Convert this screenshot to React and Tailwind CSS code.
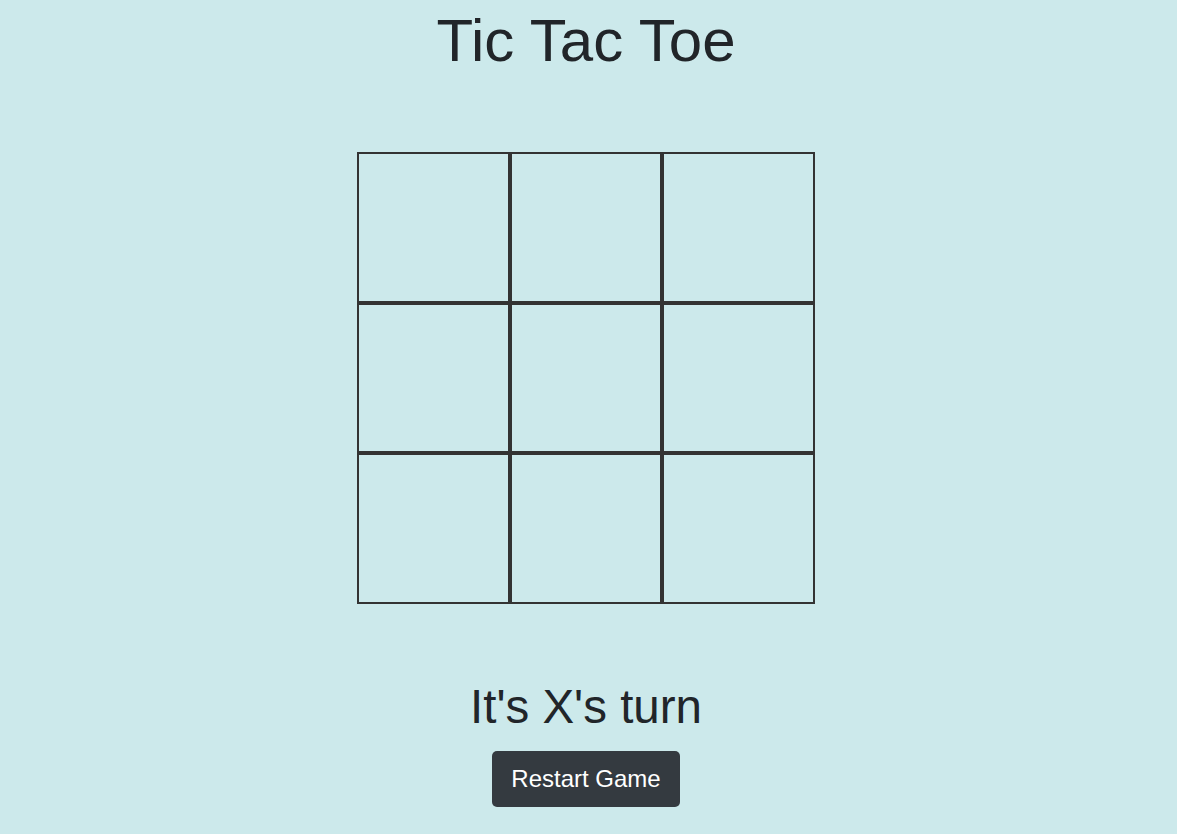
import { useState } from "react"

const Cell = ({ value, onClick }) => (
  <button
    onClick={onClick}
    className="h-[150.67px] border-2 border-[#333] flex items-center justify-center text-[80px] text-[#212529] leading-none"
  >
    {value}
  </button>
)

const App = () => {
  const [board, setBoard] = useState(Array(9).fill(null))
  const [xTurn, setXTurn] = useState(true)

  const handleClick = (i) => {
    if (board[i]) return
    const next = board.slice()
    next[i] = xTurn ? "X" : "O"
    setBoard(next)
    setXTurn(!xTurn)
  }

  const restart = () => {
    setBoard(Array(9).fill(null))
    setXTurn(true)
  }

  return (
    <div className="min-h-[834px] bg-[#cce9eb] font-['Liberation_Sans',Arial,sans-serif] text-[#212529]">
      <div className="flex flex-col items-center pr-[5px]">
        <h1 className="mt-[5px] text-[60px] leading-[1.2] font-normal">Tic Tac Toe</h1>

        <div className="mt-[75px] grid grid-cols-3 w-[458px]">
          {board.map((value, i) => (
            <Cell key={i} value={value} onClick={() => handleClick(i)} />
          ))}
        </div>

        <h2 className="mt-[74px] text-[47.5px] leading-[1.2] font-normal">
          It's {xTurn ? "X" : "O"}'s turn
        </h2>

        <button
          onClick={restart}
          className="mt-[16px] h-[56px] px-[19px] bg-[#343a40] text-white text-[24px] leading-[1.5] rounded-[5px] hover:bg-[#23272b]"
        >
          Restart Game
        </button>
      </div>
    </div>
  )
}

export default App
